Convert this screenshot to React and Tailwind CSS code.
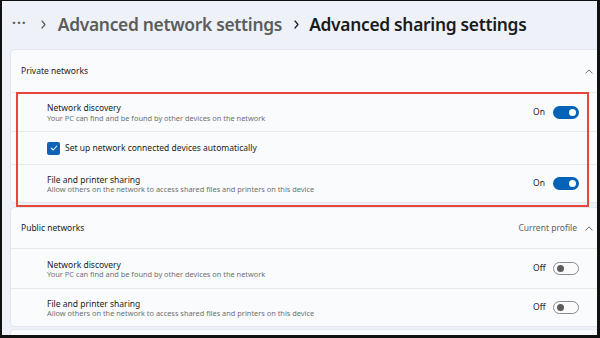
const font = { fontFamily: '"Noto Sans", "Open Sans", sans-serif' };

function Chevron({ up, className = "" }) {
  return (
    <svg viewBox="0 0 10 6" className={className} fill="none" stroke="currentColor" strokeWidth="1.1" strokeLinecap="round" strokeLinejoin="round">
      {up ? <path d="M1 5 L5 1 L9 5" /> : <path d="M1 1 L5 5 L9 1" />}
    </svg>
  );
}

function RightChevron({ className = "" }) {
  return (
    <svg viewBox="0 0 5 9" className={className} fill="none" stroke="currentColor" strokeWidth="1.2" strokeLinecap="round" strokeLinejoin="round">
      <path d="M1 1 L4 4.5 L1 8" />
    </svg>
  );
}

function Toggle({ on }) {
  return (
    <div className="flex items-center gap-[7px]">
      <span className="text-[8.5px] text-[#1b1b1b] w-[13px]">{on ? "On" : "Off"}</span>
      <div
        className={`w-[26px] h-[13px] rounded-full flex items-center px-[3px] ${
          on ? "bg-[#0063b8] justify-end" : "bg-[#fbfbfb] border border-[#8a8a8a] justify-start"
        }`}
      >
        <div className={`w-[7px] h-[7px] rounded-full ${on ? "bg-white" : "bg-[#5c5c5c]"}`}></div>
      </div>
    </div>
  );
}

function Row({ title, sub, on, h = "h-[39px]" }) {
  return (
    <div className={`${h} flex items-center border-t border-[#e7e9ee] pl-[36px] pr-[21px]`}>
      <div className="flex-1 flex flex-col leading-none pt-[2px]">
        <span className="text-[8.5px] text-[#1b1b1b]">{title}</span>
        <span className="text-[7.4px] text-[#707070] mt-[2px]">{sub}</span>
      </div>
      <Toggle on={on} />
    </div>
  );
}

export default function App() {
  return (
    <div className="w-[600px] h-[338px] bg-[#111] pl-[2px] pt-[1px] pr-[3px] pb-[3px]" style={font}>
      <div className="relative h-full bg-[#eef2f8] overflow-hidden pl-[8px]">
        {/* Breadcrumb */}
        <div className="h-[48px] flex items-center pl-[2px] pb-[1px] whitespace-nowrap">
          <span className="text-[14px] text-[#5c5c5c] tracking-[1px] font-bold leading-none pb-[4px]">···</span>
          <RightChevron className="w-[5px] h-[9px] text-[#5c5c5c] ml-[14px]" />
          <span className="ml-[12px] text-[17.4px] font-semibold text-[#5c5c5c] tracking-[-0.3px]">Advanced network settings</span>
          <RightChevron className="w-[5px] h-[9px] ml-[12px] text-[#1b1b1b]" />
          <span className="ml-[10px] text-[17.4px] font-semibold text-[#1b1b1b] tracking-[-0.3px]">Advanced sharing settings</span>
        </div>

        {/* Private networks */}
        <div className="-mr-[4px] rounded-l-[4px] border border-[#e3e6ec] bg-[#fafbfc]">
          <div className="h-[42px] flex items-center pl-[10px] pr-[7px]">
            <span className="flex-1 text-[8.5px] text-[#1b1b1b]">Private networks</span>
            <Chevron up className="w-[8px] h-[5px] text-[#5c5c5c]" />
          </div>
          <Row title="Network discovery" sub="Your PC can find and be found by other devices on the network" on />
          <div className="h-[33px] flex items-center border-t border-[#e7e9ee] pl-[36px]">
            <div className="w-[13px] h-[13px] rounded-[2px] bg-[#0f64b8] flex items-center justify-center">
              <svg viewBox="0 0 10 10" className="w-[8px] h-[8px]" fill="none" stroke="white" strokeWidth="1.3" strokeLinecap="round" strokeLinejoin="round"><path d="M1.5 5.2 L4 7.5 L8.5 2.5" /></svg>
            </div>
            <span className="ml-[5px] text-[8.5px] text-[#1b1b1b]">Set up network connected devices automatically</span>
          </div>
          <Row title="File and printer sharing" sub="Allow others on the network to access shared files and printers on this device" on h="h-[38px]" />
        </div>

        {/* Public networks */}
        <div className="mt-[4px] -mr-[4px] rounded-l-[4px] border border-[#e3e6ec] bg-[#fafbfc]">
          <div className="h-[40px] flex items-center pl-[10px] pr-[7px]">
            <span className="flex-1 text-[8.5px] text-[#1b1b1b]">Public networks</span>
            <span className="text-[8.5px] text-[#5f5f5f] mr-[8px]">Current profile</span>
            <Chevron up className="w-[8px] h-[5px] text-[#5c5c5c]" />
          </div>
          <Row title="Network discovery" sub="Your PC can find and be found by other devices on the network" on={false} h="h-[40px]" />
          <Row title="File and printer sharing" sub="Allow others on the network to access shared files and printers on this device" on={false} h="h-[38px]" />
        </div>
        <div className="mt-[2px] -mr-[4px] h-[20px] rounded-l-[4px] border border-[#e3e6ec] bg-[#fafbfc]"></div>

        {/* Annotation box */}
        <div className="absolute left-[14px] top-[91px] w-[573px] h-[115px] border-2 border-[#e8453c]"></div>
      </div>
    </div>
  );
}
